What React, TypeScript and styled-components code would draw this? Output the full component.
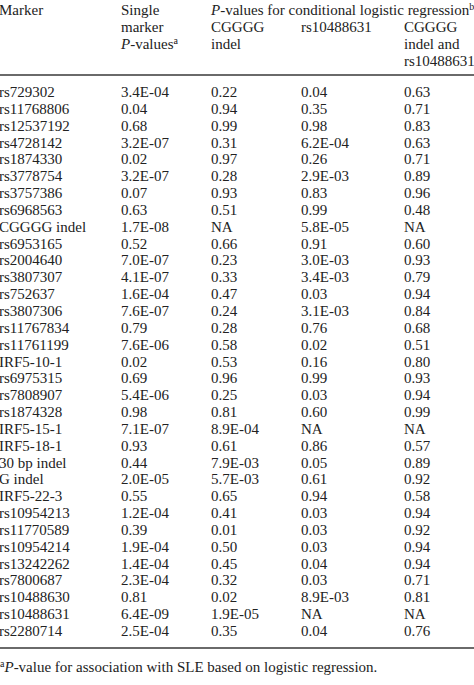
import React from "react";
import styled, { createGlobalStyle } from "styled-components";

type Row = [string, string, string, string, string];

const rows: Row[] = [
  ["rs729302", "3.4E-04", "0.22", "0.04", "0.63"],
  ["rs11768806", "0.04", "0.94", "0.35", "0.71"],
  ["rs12537192", "0.68", "0.99", "0.98", "0.83"],
  ["rs4728142", "3.2E-07", "0.31", "6.2E-04", "0.63"],
  ["rs1874330", "0.02", "0.97", "0.26", "0.71"],
  ["rs3778754", "3.2E-07", "0.28", "2.9E-03", "0.89"],
  ["rs3757386", "0.07", "0.93", "0.83", "0.96"],
  ["rs6968563", "0.63", "0.51", "0.99", "0.48"],
  ["CGGGG indel", "1.7E-08", "NA", "5.8E-05", "NA"],
  ["rs6953165", "0.52", "0.66", "0.91", "0.60"],
  ["rs2004640", "7.0E-07", "0.23", "3.0E-03", "0.93"],
  ["rs3807307", "4.1E-07", "0.33", "3.4E-03", "0.79"],
  ["rs752637", "1.6E-04", "0.47", "0.03", "0.94"],
  ["rs3807306", "7.6E-07", "0.24", "3.1E-03", "0.84"],
  ["rs11767834", "0.79", "0.28", "0.76", "0.68"],
  ["rs11761199", "7.6E-06", "0.58", "0.02", "0.51"],
  ["IRF5-10-1", "0.02", "0.53", "0.16", "0.80"],
  ["rs6975315", "0.69", "0.96", "0.99", "0.93"],
  ["rs7808907", "5.4E-06", "0.25", "0.03", "0.94"],
  ["rs1874328", "0.98", "0.81", "0.60", "0.99"],
  ["IRF5-15-1", "7.1E-07", "8.9E-04", "NA", "NA"],
  ["IRF5-18-1", "0.93", "0.61", "0.86", "0.57"],
  ["30 bp indel", "0.44", "7.9E-03", "0.05", "0.89"],
  ["G indel", "2.0E-05", "5.7E-03", "0.61", "0.92"],
  ["IRF5-22-3", "0.55", "0.65", "0.94", "0.58"],
  ["rs10954213", "1.2E-04", "0.41", "0.03", "0.94"],
  ["rs11770589", "0.39", "0.01", "0.03", "0.92"],
  ["rs10954214", "1.9E-04", "0.50", "0.03", "0.94"],
  ["rs13242262", "1.4E-04", "0.45", "0.04", "0.94"],
  ["rs7800687", "2.3E-04", "0.32", "0.03", "0.71"],
  ["rs10488630", "0.81", "0.02", "8.9E-03", "0.81"],
  ["rs10488631", "6.4E-09", "1.9E-05", "NA", "NA"],
  ["rs2280714", "2.5E-04", "0.35", "0.04", "0.76"],
];

const serif = `"Liberation Serif", "Times New Roman", "DejaVu Serif", serif`;

const GlobalStyle = createGlobalStyle`
  html, body {
    margin: 0;
    padding: 0;
    background: #ffffff;
    overflow: hidden;
  }
  body {
    font-family: ${serif};
    font-size: 15px;
    color: #222222;
  }
`;

const Page = styled.div`
  width: 474px;
  height: 685px;
  overflow: hidden;
  font-family: ${serif};
  font-size: 15px;
  color: #222222;
`;

const Table = styled.table`
  margin-left: -1px;
  width: 476px;
  border-collapse: collapse;
  table-layout: fixed;
  font-family: ${serif};
  font-size: 15px;
  color: #222222;
`;

const Head = styled.thead`
  border-bottom: 2px solid #6a6a6a;
`;

const Body = styled.tbody`
  border-bottom: 2px solid #6a6a6a;
`;

const HeadCell = styled.th<{ $first?: boolean; $last?: boolean }>`
  font-family: ${serif};
  font-weight: normal;
  text-align: left;
  vertical-align: top;
  line-height: 17px;
  padding: ${(p) => (p.$first ? "2px" : "0")} 0 ${(p) => (p.$last ? "4px" : "0")} 0;
  white-space: nowrap;
`;

const Cell = styled.td<{ $first?: boolean; $last?: boolean }>`
  font-family: ${serif};
  text-align: left;
  line-height: 16.85px;
  padding: ${(p) => (p.$first ? "8px" : "0")} 0 ${(p) => (p.$last ? "7px" : "0")} 0;
  white-space: nowrap;
`;

const Sup = styled.sup`
  font-size: 10px;
  line-height: 0;
  vertical-align: 5px;
`;

const Note = styled.p`
  margin: 0;
  padding-top: 10px;
  line-height: 17px;
  white-space: nowrap;
  font-family: ${serif};
`;

const P = () => <i>P</i>;

export default function App() {
  return (
    <Page>
      <GlobalStyle />
      <Table>
        <colgroup>
          <col style={{ width: 122 }} />
          <col style={{ width: 90 }} />
          <col style={{ width: 90 }} />
          <col style={{ width: 103 }} />
          <col />
        </colgroup>
        <Head>
          <tr>
            <HeadCell $first rowSpan={2}>
              Marker
            </HeadCell>
            <HeadCell $first rowSpan={2}>
              Single
              <br />
              marker
              <br />
              <P />-values<Sup>a</Sup>
            </HeadCell>
            <HeadCell $first colSpan={3}>
              <P />-values for conditional logistic regression<Sup>b</Sup>
            </HeadCell>
          </tr>
          <tr>
            <HeadCell $last>
              CGGGG
              <br />
              indel
            </HeadCell>
            <HeadCell $last>rs10488631</HeadCell>
            <HeadCell $last>
              CGGGG
              <br />
              indel and
              <br />
              rs10488631
            </HeadCell>
          </tr>
        </Head>
        <Body>
          {rows.map((r, i) => (
            <tr key={r[0]}>
              {r.map((v, j) => (
                <Cell key={j} $first={i === 0} $last={i === rows.length - 1}>
                  {v}
                </Cell>
              ))}
            </tr>
          ))}
        </Body>
      </Table>
      <Note>
        <Sup>a</Sup>
        <P />-value for association with SLE based on logistic regression.
      </Note>
    </Page>
  );
}
